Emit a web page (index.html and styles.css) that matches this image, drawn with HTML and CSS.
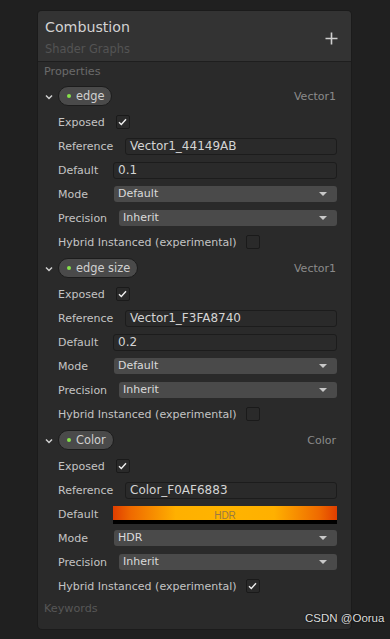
FILE: index.html
```html
<!DOCTYPE html>
<html>
<head>
<meta charset="utf-8">
<link rel="stylesheet" href="styles.css">
</head>
<body>
<div class="panel">
  <div class="header">
    <div class="titles">
      <div class="title">Combustion</div>
      <div class="subtitle">Shader Graphs</div>
    </div>
    <svg class="plus" width="13" height="13" viewBox="0 0 13 13"><path d="M6.5 0.5V12.5M0.5 6.5H12.5" stroke="#cfcfcf" stroke-width="1.6" fill="none"/></svg>
  </div>
  <div class="section-title">Properties</div>

  <div class="prop">
    <div class="prop-head">
      <svg class="chev" width="8" height="6" viewBox="0 0 8 6"><path d="M1 1.5L4 4.5L7 1.5" stroke="#d0d0d0" stroke-width="1.5" fill="none"/></svg>
      <span class="pill"><span class="dot"></span>edge</span>
      <span class="type">Vector1</span>
    </div>
    <div class="row"><span class="label">Exposed</span><span class="check on"><svg width="9" height="8" viewBox="0 0 9 8"><path d="M1 4.3L3.3 6.5L8 1.3" stroke="#f0f0f0" stroke-width="1.4" fill="none"/></svg></span></div>
    <div class="row"><span class="label w-ref">Reference</span><span class="field">Vector1_44149AB</span></div>
    <div class="row"><span class="label w-def">Default</span><span class="field">0.1</span></div>
    <div class="row"><span class="label w-mode">Mode</span><span class="drop">Default<i class="arrow"></i></span></div>
    <div class="row"><span class="label w-prec">Precision</span><span class="drop">Inherit<i class="arrow"></i></span></div>
    <div class="row"><span class="label w-hyb">Hybrid Instanced (experimental)</span><span class="check"></span></div>
  </div>

  <div class="prop">
    <div class="prop-head">
      <svg class="chev" width="8" height="6" viewBox="0 0 8 6"><path d="M1 1.5L4 4.5L7 1.5" stroke="#d0d0d0" stroke-width="1.5" fill="none"/></svg>
      <span class="pill"><span class="dot"></span>edge size</span>
      <span class="type">Vector1</span>
    </div>
    <div class="row"><span class="label">Exposed</span><span class="check on"><svg width="9" height="8" viewBox="0 0 9 8"><path d="M1 4.3L3.3 6.5L8 1.3" stroke="#f0f0f0" stroke-width="1.4" fill="none"/></svg></span></div>
    <div class="row"><span class="label w-ref">Reference</span><span class="field">Vector1_F3FA8740</span></div>
    <div class="row"><span class="label w-def">Default</span><span class="field">0.2</span></div>
    <div class="row"><span class="label w-mode">Mode</span><span class="drop">Default<i class="arrow"></i></span></div>
    <div class="row"><span class="label w-prec">Precision</span><span class="drop">Inherit<i class="arrow"></i></span></div>
    <div class="row"><span class="label w-hyb">Hybrid Instanced (experimental)</span><span class="check"></span></div>
  </div>

  <div class="prop">
    <div class="prop-head">
      <svg class="chev" width="8" height="6" viewBox="0 0 8 6"><path d="M1 1.5L4 4.5L7 1.5" stroke="#d0d0d0" stroke-width="1.5" fill="none"/></svg>
      <span class="pill"><span class="dot"></span>Color</span>
      <span class="type">Color</span>
    </div>
    <div class="row"><span class="label">Exposed</span><span class="check on"><svg width="9" height="8" viewBox="0 0 9 8"><path d="M1 4.3L3.3 6.5L8 1.3" stroke="#f0f0f0" stroke-width="1.4" fill="none"/></svg></span></div>
    <div class="row"><span class="label w-ref">Reference</span><span class="field">Color_F0AF6883</span></div>
    <div class="row"><span class="label w-def">Default</span><span class="color"><span class="hdr">HDR</span></span></div>
    <div class="row"><span class="label w-mode">Mode</span><span class="drop">HDR<i class="arrow"></i></span></div>
    <div class="row"><span class="label w-prec">Precision</span><span class="drop">Inherit<i class="arrow"></i></span></div>
    <div class="row"><span class="label w-hyb">Hybrid Instanced (experimental)</span><span class="check on"><svg width="9" height="8" viewBox="0 0 9 8"><path d="M1 4.3L3.3 6.5L8 1.3" stroke="#f0f0f0" stroke-width="1.4" fill="none"/></svg></span></div>
  </div>

  <div class="section-title keywords">Keywords</div>
</div>
<div class="watermark">CSDN @Oorua</div>
</body>
</html>
```

FILE: styles.css
```css
html, body {
  margin: 0;
  padding: 0;
  background: #202020;
  width: 390px;
  height: 639px;
  overflow: hidden;
  font-family: "DejaVu Sans", Verdana, sans-serif;
  font-size: 11px;
  color: #c4c4c4;
}
.panel {
  margin: 11px 0 0 38px;
  width: 313px;
  background: #2a2a2a;
  border-radius: 4px;
  box-shadow: 0 0 0 1px #1b1b1b;
  padding-bottom: 10px;
}
.header {
  height: 50px;
  background: #333333;
  border-radius: 4px 4px 0 0;
  border-bottom: 1px solid #1e1e1e;
  display: flex;
  align-items: center;
  justify-content: space-between;
  padding: 0 13px 0 7px;
  box-sizing: content-box;
}
.titles {
  display: flex;
  flex-direction: column;
  padding-top: 1px;
}
.title {
  font-size: 14.2px;
  line-height: 18px;
  color: #d2d2d2;
}
.subtitle {
  font-size: 11.4px;
  line-height: 14px;
  margin-top: 6px;
  color: #545454;
}
.plus {
  margin-top: 4px;
}
.section-title {
  height: 20px;
  line-height: 20px;
  padding-left: 6px;
  color: #6a6a6a;
  font-size: 11.2px;
}
.prop-head {
  height: 24px;
  margin: 2px 0 2px;
  display: flex;
  align-items: center;
  padding-left: 7px;
  padding-right: 15px;
}
.chev {
  margin-right: 5px;
  margin-top: 1px;
}
.pill {
  height: 18px;
  display: inline-flex;
  align-items: center;
  background: #4a4a4a;
  border: 1px solid #1c1c1c;
  border-radius: 10px;
  padding: 0 7px 0 8px;
  color: #d0d0d0;
  font-size: 11.4px;
}
.dot {
  width: 4px;
  height: 4px;
  border-radius: 50%;
  background: #86e24a;
  margin-right: 5px;
}
.type {
  margin-left: auto;
  color: #8a8a8a;
}
.row {
  height: 24px;
  display: flex;
  align-items: center;
  padding-left: 20px;
  padding-right: 14px;
}
.label {
  white-space: nowrap;
}
.label + .check {
  margin-left: 11px;
}
.w-ref { width: 67px; flex: none; }
.w-def { width: 55px; flex: none; }
.w-mode { width: 56px; flex: none; }
.w-prec { width: 61px; flex: none; }
.w-hyb + .check { margin-left: 9px; }
.check {
  width: 12px;
  height: 12px;
  background: #2a2a2a;
  border: 1px solid #1a1a1a;
  border-radius: 2px;
  display: inline-flex;
  align-items: center;
  justify-content: center;
}
.field {
  flex: 1;
  height: 15px;
  line-height: 15px;
  background: #2a2a2a;
  border: 1px solid #1c1c1c;
  border-radius: 3px;
  padding: 0 4px;
  font-size: 12px;
  color: #d4d4d4;
}
.drop {
  flex: 1;
  height: 16px;
  line-height: 16px;
  background: #4a4a4a;
  border-radius: 3px;
  padding: 0 4px;
  color: #dadada;
  display: flex;
  align-items: center;
}
.arrow {
  margin-left: auto;
  margin-right: 6px;
  width: 0;
  height: 0;
  border-left: 4px solid transparent;
  border-right: 4px solid transparent;
  border-top: 4px solid #c8c8c8;
}
.color {
  flex: 1;
  height: 14px;
  margin-top: 2px;
  background: linear-gradient(90deg, #e03e00 0%, #ef6a00 8%, #ffb000 28%, #ffb400 50%, #ffb000 72%, #ef6a00 92%, #e03e00 100%);
  border-bottom: 4px solid #000;
  display: flex;
  justify-content: center;
  align-items: flex-end;
}
.hdr {
  font-family: "Liberation Sans", Arial, sans-serif;
  font-size: 10px;
  line-height: 10px;
  color: #9a7a40;
  margin-bottom: -1px;
}
.keywords {
  color: #575757;
  margin-top: 1px;
}
.watermark {
  position: absolute;
  left: 305px;
  top: 612px;
  font-family: "Liberation Sans", Arial, sans-serif;
  font-size: 11.5px;
  color: #dcdcdc;
  text-shadow: 0 0 2px #000;
}
```
